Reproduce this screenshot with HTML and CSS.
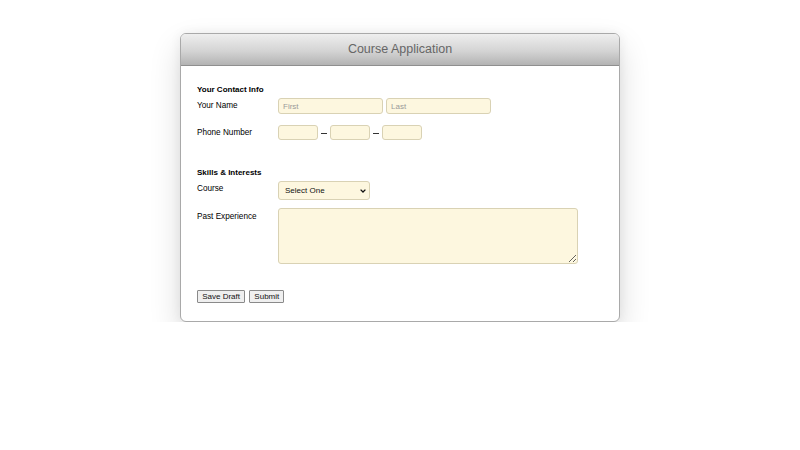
FILE: index.html
```html
<!DOCTYPE html>
<html lang="en">
<head>
<meta charset="utf-8">
<title>Course Application</title>
<link rel="stylesheet" href="styles.css">
</head>
<body>
<div class="card">
  <div class="card-header">Course Application</div>
  <form class="card-body">
    <div class="section-title">Your Contact Info</div>
    <div class="row row-name">
      <label class="label">Your Name</label>
      <div class="fields">
        <input class="field field-name" type="text" placeholder="First">
        <input class="field field-name" type="text" placeholder="Last">
      </div>
    </div>
    <div class="row row-phone">
      <label class="label">Phone Number</label>
      <div class="fields phone">
        <input class="field field-phone" type="text">
        <span class="dash"></span>
        <input class="field field-phone" type="text">
        <span class="dash"></span>
        <input class="field field-phone" type="text">
      </div>
    </div>
    <div class="section-title section-skills">Skills &amp; Interests</div>
    <div class="row row-course">
      <label class="label">Course</label>
      <div class="fields">
        <div class="select-wrap">
          <select class="field field-select">
            <option>Select One</option>
          </select>
          <svg class="chevron" width="6" height="4" viewBox="0 0 6 4" aria-hidden="true">
            <path d="M0.6 0.6 L3 3 L5.4 0.6" fill="none" stroke="#111" stroke-width="1.3"/>
          </svg>
        </div>
      </div>
    </div>
    <div class="row row-exp">
      <label class="label">Past Experience</label>
      <div class="fields">
        <textarea class="field field-area"></textarea>
      </div>
    </div>
    <div class="actions">
      <button type="button" class="btn">Save Draft</button>
      <button type="button" class="btn">Submit</button>
    </div>
  </form>
</div>
</body>
</html>
```

FILE: styles.css
```css
html, body {
  margin: 0;
  padding: 0;
  background: #ffffff;
}

body {
  font-family: "Liberation Sans", Arial, sans-serif;
  color: #000;
  padding-top: 33px;
}

.card {
  width: 438px;
  margin: 0 auto;
  border: 1px solid #a9a9a9;
  border-radius: 6px;
  background: #fff;
  box-shadow: 0 14px 32px rgba(0, 0, 0, 0.14), 0 0 12px rgba(0, 0, 0, 0.06);
  overflow: hidden;
}

.card-header {
  height: 31px;
  line-height: 31px;
  text-align: center;
  font-size: 12.5px;
  color: #666;
  background: linear-gradient(to bottom, #eeeeee 0%, #d4d4d4 55%, #b3b3b3 100%);
  border-bottom: 1px solid #8f8f8f;
}

.card-body {
  display: flex;
  flex-direction: column;
  padding: 19px 16px 18px 16px;
  margin: 0;
}

.section-title {
  font-size: 8px;
  font-weight: bold;
  line-height: 10px;
  margin-bottom: 3px;
}

.section-skills {
  margin-top: 28px;
}

.row {
  display: flex;
  align-items: flex-start;
}

.row-phone {
  margin-top: 11px;
}

.row-exp {
  margin-top: 8px;
}

.label {
  width: 81px;
  flex: none;
  font-size: 8.2px;
  line-height: 10px;
  padding-top: 3px;
}

.row-exp .label {
  padding-top: 4px;
}

.fields {
  display: flex;
  align-items: center;
}

.field {
  box-sizing: border-box;
  background: #fdf7df;
  border: 1px solid #d9d2b4;
  border-radius: 3px;
  font-family: "Liberation Sans", Arial, sans-serif;
  font-size: 8px;
  color: #222;
  margin: 0;
  outline: none;
}

.field::placeholder {
  color: #9a9a9a;
}

.field-name {
  width: 105px;
  height: 16px;
  padding: 0 4px;
  margin-right: 3px;
}

.field-phone {
  width: 40px;
  height: 15px;
  padding: 0 3px;
}

.dash {
  width: 6px;
  height: 1px;
  background: #333;
  margin: 2px 3px 0 3px;
}

.select-wrap {
  position: relative;
  display: flex;
}

.field-select {
  -webkit-appearance: none;
  appearance: none;
  width: 92px;
  height: 19px;
  padding: 0 6px;
  color: #111;
}

.chevron {
  position: absolute;
  right: 4px;
  top: 8px;
  pointer-events: none;
}

.field-area {
  width: 300px;
  height: 56px;
  resize: both;
  padding: 3px;
}

.actions {
  display: flex;
  gap: 4px;
  margin-top: 26px;
}

.btn {
  box-sizing: border-box;
  height: 13px;
  padding: 0 4.2px;
  font-family: "Liberation Sans", Arial, sans-serif;
  font-size: 8px;
  line-height: 11px;
  color: #111;
  background: #efefef;
  border: 1px solid #8a8a8a;
  border-radius: 1px;
}
```
